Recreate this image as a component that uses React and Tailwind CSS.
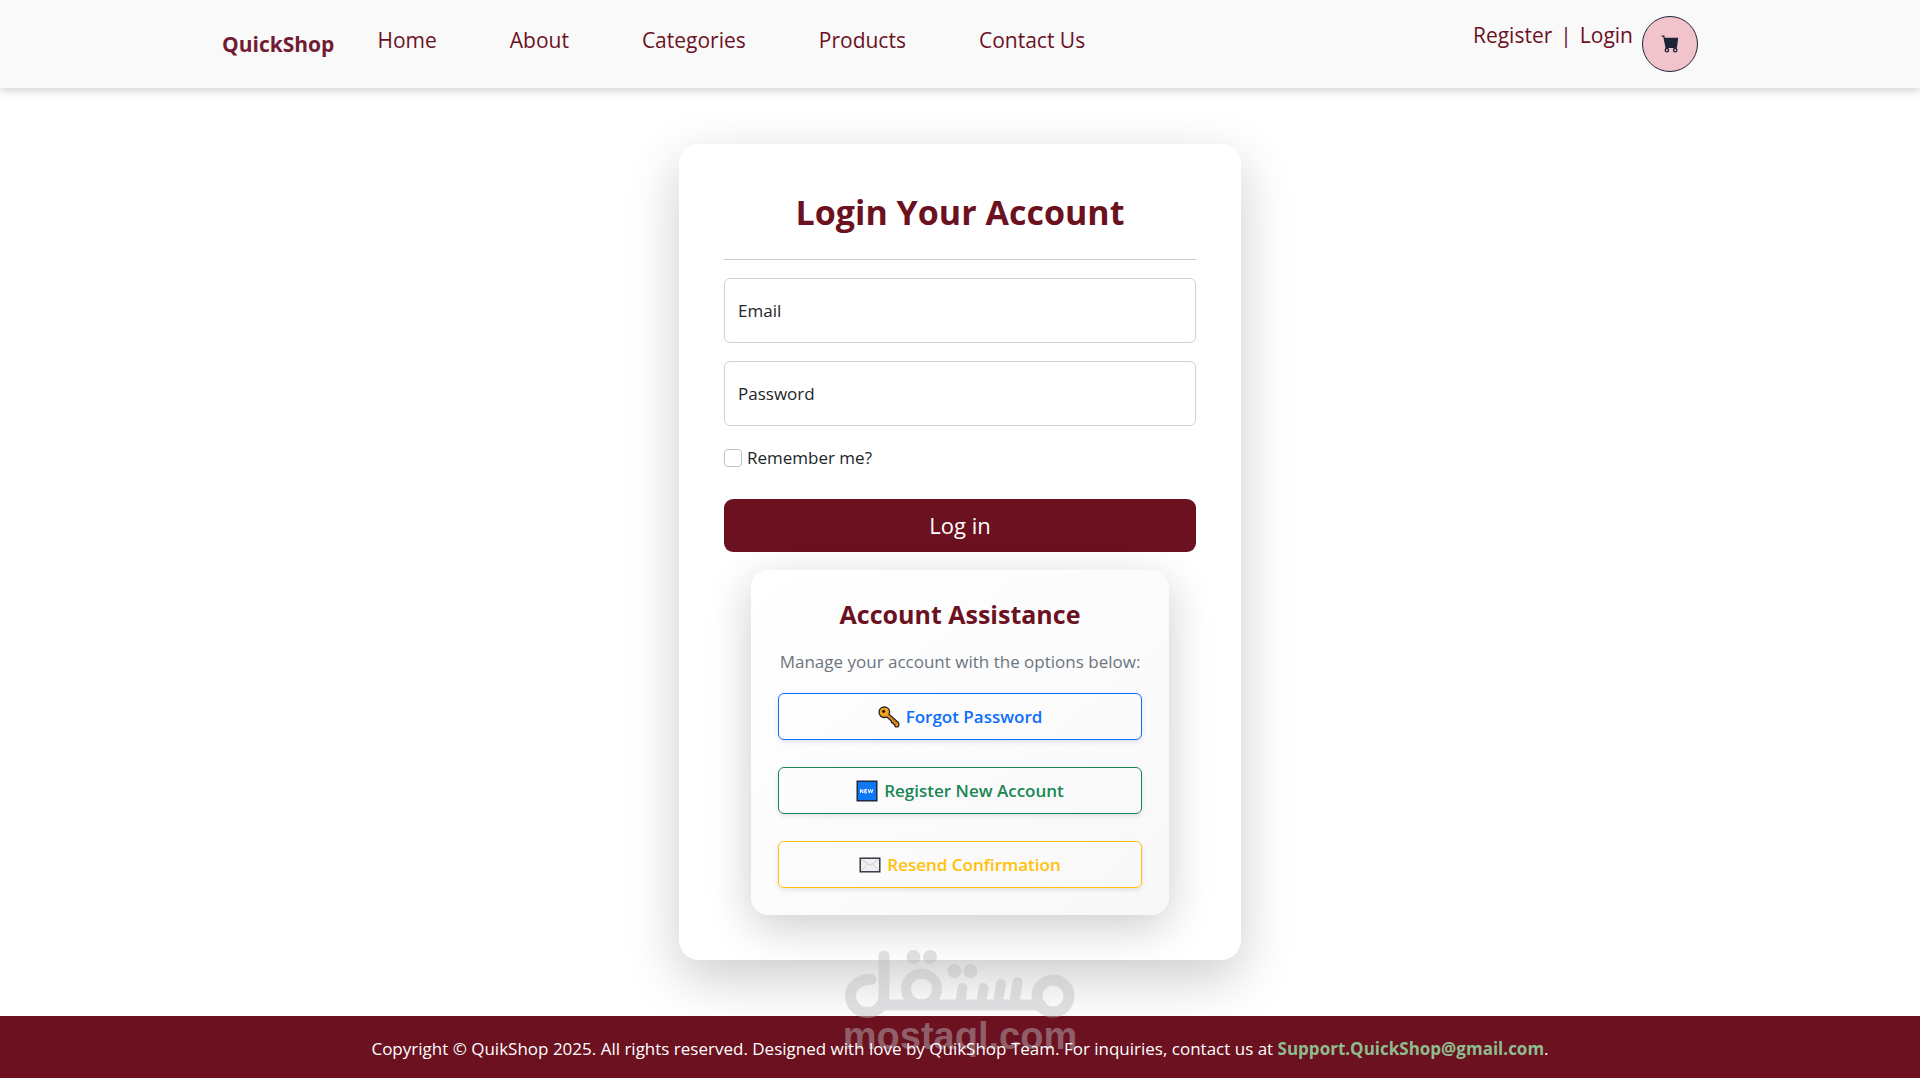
const navLinks = ["Home", "About", "Categories", "Products", "Contact Us"];

function CartIcon() {
  return (
    <svg viewBox="0 0 18 18" className="size-[18px]" aria-hidden="true">
      <path d="M0.600 1.200h2.200l2.300 11.300h10.400" fill="none" stroke="#1c2237" strokeWidth="1.200" />
      <path d="M2.800 2.800H17.200l-1.200 9.800H4.900z" fill="#1c2237" />
      <circle cx="5.900" cy="15.200" r="1.700" fill="#f1c4cb" stroke="#1c2237" strokeWidth="1.300" />
      <circle cx="14.200" cy="15.200" r="1.700" fill="#f1c4cb" stroke="#1c2237" strokeWidth="1.300" />
    </svg>
  );
}

function KeyIcon() {
  return (
    <svg viewBox="0 0 22 22" className="size-[22px]" aria-hidden="true">
      <path
        d="M11.600 5.900c0 .9-.2 1.600-.6 2.300l9.300 8.400c.5.5.7 1 .6 1.600l-.3 1.600c-.1.7-.7 1.100-1.400 1.100h-1.500l-1-1.100.1-1.400-1.500-.2-.3-1.500-1.500-.2-.1-1.500-4.600-4.100c-.8.4-1.600.6-2.500.6A5.100 5.100 0 0 1 1.100 6.100C1.100 3.300 3.300 1 6.300 1s5.300 2 5.300 4.900z"
        fill="#f3a21b"
        stroke="#20212c"
        strokeWidth="1.300"
        strokeLinejoin="round"
      />
      <path d="M10.300 9.300l9.200 8.700" stroke="#c9741a" strokeWidth="1.300" />
      <circle cx="5.600" cy="5.300" r="1.600" fill="#20212c" />
    </svg>
  );
}

function NewIcon() {
  return (
    <svg viewBox="0 0 22 22" className="size-[22px]" aria-hidden="true">
      <rect x="1.200" y="1.200" width="19.600" height="19.600" fill="#0f78f5" stroke="#1c2237" strokeWidth="1.400" />
      <path
        d="M4.500 13V9.300l2.400 3.700V9.300M11 9.400H8.800v3.500H11M8.800 11.100h2M12.200 9.200l1.100 3.700 1.200-3.500 1.200 3.500 1.200-3.700"
        fill="none"
        stroke="#fff"
        strokeWidth="1"
      />
    </svg>
  );
}

function EnvelopeIcon() {
  return (
    <svg viewBox="0 0 22 22" className="size-[22px]" aria-hidden="true">
      <rect x="1.200" y="4.200" width="19.600" height="13.600" fill="#f0f0f1" stroke="#2b2b3b" strokeWidth="1.400" />
      <path d="M2 5l9 6.500L20 5M2 17l6.500-7M20 17l-6.500-7" fill="none" stroke="#c9c9cc" strokeWidth="0.900" />
    </svg>
  );
}

const options = [
  { label: "Forgot Password", Icon: KeyIcon, style: "border-[#0d6efd] text-[#0d6efd]" },
  { label: "Register New Account", Icon: NewIcon, style: "border-[#198754] text-[#198754]" },
  { label: "Resend Confirmation", Icon: EnvelopeIcon, style: "border-[#ffc107] text-[#ffc107]" },
];

function Field({ id, label, type }) {
  return (
    <div className="relative">
      <input
        id={id}
        type={type}
        placeholder=" "
        className="peer block h-[65px] w-full rounded-[6px] border border-[#ced0d6] bg-white px-[14px]"
      />
      <label
        htmlFor={id}
        className="pointer-events-none absolute inset-y-0 left-[14px] flex items-center peer-[:not(:placeholder-shown)]:hidden"
      >
        {label}
      </label>
    </div>
  );
}

function Watermark() {
  return (
    <div className="pointer-events-none absolute inset-x-0 bottom-6 flex flex-col items-center text-[#bdbdc2] opacity-45">
      <svg viewBox="0 0 230 68" className="h-[68px] w-[230px]" fill="none" stroke="currentColor" aria-hidden="true">
        <path
          d="M26 29.500C14 29 5.500 36.500 5.500 46A16.500 16.500 0 0 0 22 62.500C33 62.500 39 55 39 46V6M36 55H196"
          strokeWidth="11"
          strokeLinecap="round"
          strokeLinejoin="round"
        />
        <circle cx="76.500" cy="39" r="15.500" strokeWidth="10" />
        <circle cx="208" cy="46" r="16" strokeWidth="11" />
        <path d="M115 55l2.500-17M136 55l2.500-17M152.500 55l3.500-21M169 55l3.500-23" strokeWidth="10" strokeLinecap="round" />
        <g fill="currentColor" stroke="none">
          <circle cx="68.500" cy="7" r="7" />
          <circle cx="85" cy="7" r="7" />
          <circle cx="109.500" cy="21" r="7" />
          <circle cx="125.500" cy="21" r="7" />
        </g>
      </svg>
      <span className="font-['Liberation_Sans'] text-[38px] leading-9 font-bold">mostaql.com</span>
    </div>
  );
}

export default function App() {
  return (
    <div className="relative flex min-h-screen flex-col overflow-x-hidden bg-white font-['Open_Sans','Noto_Sans',sans-serif] text-[17px] text-[#212529]">
      <header className="relative bg-[#f9f9f9] px-6 py-4 shadow-[0_2px_9px_rgba(0,0,0,0.2)]">
        <div className="mx-auto flex h-14 max-w-[1476px] items-start">
          <a href="#" className="mr-[43px] self-center text-[21px] leading-8 font-bold text-[#721c34]">
            QuickShop
          </a>
          <nav className="flex gap-[73px] pt-2 text-[21px] leading-8 text-[#6b111f]">
            {navLinks.map((name) => (
              <a key={name} href="#">
                {name}
              </a>
            ))}
          </nav>
          <div className="ml-auto flex gap-[9px] text-[21px] leading-8 text-[#6b111f]">
            <div className="flex gap-2 pt-[3px]">
              <a href="#">Register</a>
              <span>|</span>
              <a href="#">Login</a>
            </div>
            <button
              type="button"
              aria-label="Cart"
              className="flex size-14 items-center justify-center rounded-full border border-[#1c2237] bg-[#f1c4cb]"
            >
              <CartIcon />
            </button>
          </div>
        </div>
      </header>

      <main className="flex flex-1 justify-center px-6 py-14">
        <section className="w-full max-w-[562px] rounded-[20px] bg-white px-[45px] py-[45px] shadow-[0_18px_54px_rgba(0,0,0,0.2)]">
          <h1 className="text-center text-[34px] leading-[46px] font-bold text-[#6b111f]">Login Your Account</h1>
          <hr className="mt-6 mb-[18px] border-[#c9cbce]" />
          <form onSubmit={(e) => e.preventDefault()}>
            <div className="flex flex-col gap-[18px]">
              <Field id="email" label="Email" type="email" />
              <Field id="password" label="Password" type="password" />
            </div>
            <label className="mt-[18px] flex items-center gap-[5px] leading-[27px]">
              <input
                type="checkbox"
                className="size-[18px] appearance-none rounded-[4px] border border-[#bfc1cb] bg-white"
              />
              Remember me?
            </label>
            <button
              type="submit"
              className="mt-7 block h-[53px] w-full rounded-[9px] bg-[#6b111f] text-[22px] text-white"
            >
              Log in
            </button>
          </form>
          <section className="mx-[27px] mt-[18px] rounded-[18px] bg-gradient-to-br from-white to-[#f8f8f9] p-[27px] text-center shadow-[0_12px_45px_rgba(0,0,0,0.2)]">
            <h2 className="text-[25px] leading-[35px] font-bold text-[#6b111f]">Account Assistance</h2>
            <p className="mt-4 leading-[27px] text-[#6c757d]">Manage your account with the options below:</p>
            <div className="mt-[18px] flex flex-col gap-[27px]">
              {options.map(({ label, Icon, style }) => (
                <button
                  key={label}
                  type="button"
                  className={`flex h-[47px] items-center justify-center gap-[6px] rounded-[6px] border font-semibold shadow-[0_2px_5px_rgba(0,0,0,0.1)] ${style}`}
                >
                  <Icon />
                  {label}
                </button>
              ))}
            </div>
          </section>
        </section>
      </main>

      <footer className="bg-[#6b111f] px-6 pt-5 pb-4 text-center leading-[26px] text-white">
        <p className="relative z-10">
          Copyright © QuikShop 2025. All rights reserved. Designed with love by QuikShop Team. For inquiries, contact
          us at{" "}
          <a href="#" className="font-bold text-[#8fbc8f]">
            Support.QuickShop@gmail.com
          </a>
          .
        </p>
      </footer>
      <Watermark />
    </div>
  );
}
